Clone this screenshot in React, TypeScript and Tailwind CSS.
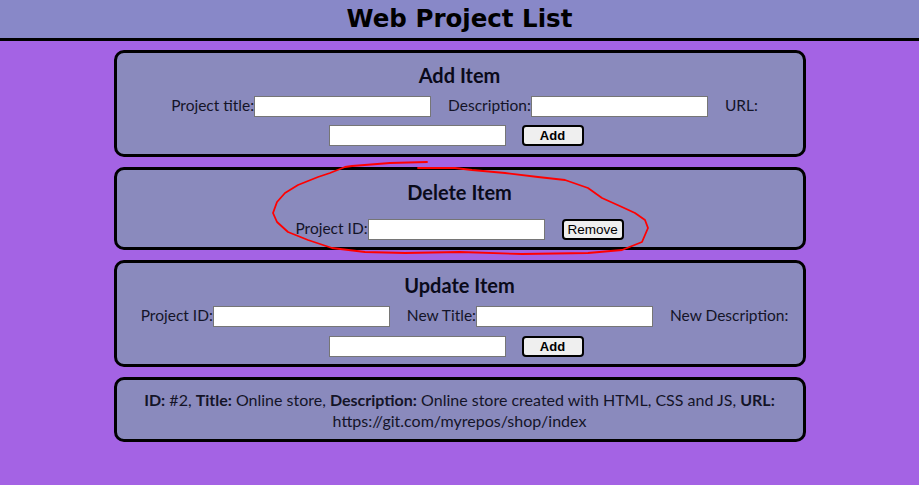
import React from "react";

const font = { fontFamily: "Lato, 'Liberation Sans', sans-serif" };

function Label({ text }: { text: string }) {
  return <span className="text-[15.5px] text-[#141428] leading-[19px] pb-[2px]">{text}</span>;
}

function Field({ label }: { label: string }) {
  return (
    <div className="flex items-center">
      <Label text={label} />
      <input
        type="text"
        className="w-[177px] h-[21px] bg-white border border-[#767676] outline-none"
      />
    </div>
  );
}

function Btn({ label, bold }: { label: string; bold?: boolean }) {
  return (
    <button
      className={`w-[62px] h-[21px] border-2 border-black rounded-[4px] bg-[#efefef] text-black leading-none ${
        bold ? "font-bold text-[13px]" : "font-normal text-[13.5px]"
      }`}
      style={{ fontFamily: "'Liberation Sans', Arial, sans-serif" }}
    >
      {label}
    </button>
  );
}

function Card({ children, className = "" }: { children: React.ReactNode; className?: string }) {
  return (
    <div
      className={`w-[692px] mx-auto border-[3px] border-black rounded-[10px] bg-[#8a8abd] ${className}`}
    >
      {children}
    </div>
  );
}

function Title({ text }: { text: string }) {
  return (
    <h2 className="text-center text-[20px] font-bold leading-[24px] text-[#0a0a1a]">{text}</h2>
  );
}

export default function App() {
  return (
    <div className="relative w-full h-[485px] bg-[#a463e4] overflow-hidden" style={font}>
      <header className="h-[41px] bg-[#8888c8] border-b-[3px] border-black flex items-center justify-center">
        <h1
          className="text-[24.5px] font-bold text-black leading-none"
          style={{ fontFamily: "'DejaVu Sans', Verdana, sans-serif" }}
        >
          Web Project List
        </h1>
      </header>

      <main className="flex flex-col gap-[10px] pt-[9px]">
        <Card className="pt-[10px] pb-[8px]">
          <Title text="Add Item" />
          <div className="mt-[9px] flex justify-center items-center gap-[17px] pl-[10px]">
            <Field label="Project title:" />
            <Field label="Description:" />
            <Label text="URL:" />
          </div>
          <div className="mt-[8px] flex justify-center items-center gap-[16px] pr-[7px]">
            <input type="text" className="w-[177px] h-[21px] bg-white border border-[#767676] outline-none" />
            <Btn label="Add" bold />
          </div>
        </Card>

        <Card className="pt-[10px] pb-[7px]">
          <Title text="Delete Item" />
          <div className="mt-[15px] flex justify-center items-center gap-[17px]">
            <Field label="Project ID:" />
            <Btn label="Remove" />
          </div>
        </Card>

        <Card className="pt-[10px] pb-[7px]">
          <Title text="Update Item" />
          <div className="mt-[9px] flex justify-center items-center gap-[17px] pl-[10px]">
            <Field label="Project ID:" />
            <Field label="New Title:" />
            <Label text="New Description:" />
          </div>
          <div className="mt-[9px] flex justify-center items-center gap-[16px] pr-[7px]">
            <input type="text" className="w-[177px] h-[21px] bg-white border border-[#767676] outline-none" />
            <Btn label="Add" bold />
          </div>
        </Card>

        <Card className="pt-[9px] pb-[8px] px-[20px]">
          <p className="text-center text-[16px] leading-[21px] text-[#141428]">
            <b>ID:</b> #2, <b>Title:</b> Online store, <b>Description:</b> Online store created with HTML, CSS and JS, <b>URL:</b>
            <br />
            https://git.com/myrepos/shop/index
          </p>
        </Card>
      </main>

      <svg
        className="absolute left-0 top-0 pointer-events-none"
        width="919"
        height="485"
        viewBox="0 0 919 485"
      >
        <path
          d="M427,162 L390,163 L352,166 L345,167 L330,173 L318,177 L298,185 L285,193 L277,202 L273,213 L277,222 L288,232 L308,240 L332,248 L365,252 L405,253 L460,252 L522,254 L588,253 L622,250 L642,242 L648,228 L645,220 L635,213 L622,207 L602,198 L588,188 L565,180 L538,177 L505,173 L472,170 L455,168 L418,168"
          fill="none"
          stroke="#ff0000"
          strokeWidth="1.8"
          strokeLinejoin="round"
          strokeLinecap="round"
        />
      </svg>
    </div>
  );
}
